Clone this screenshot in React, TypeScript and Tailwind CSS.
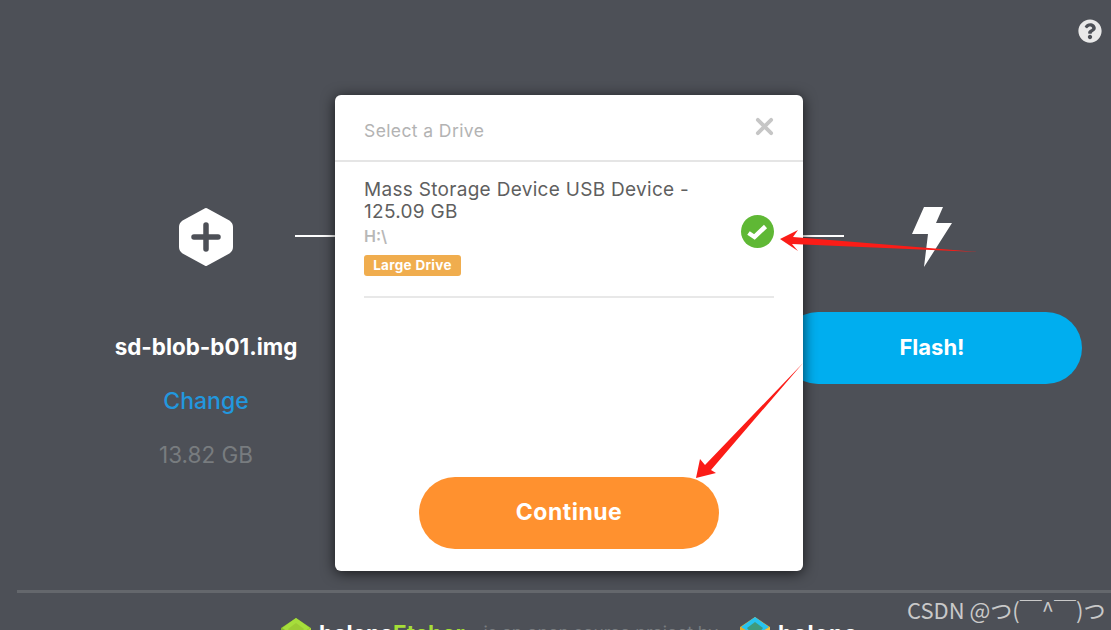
import { FaQuestionCircle } from "react-icons/fa";

const font = { fontFamily: "Inter, 'Noto Sans', sans-serif" };

function Cube({ top, left, right, center }: { top: string; left: string; right: string; center: string }) {
  return (
    <svg viewBox="0 0 30 34" className="w-[30px] h-[34px] shrink-0">
      <path d="M15 0 L30 10 V25 L15 34 L0 25 V10 Z" fill={left} />
      <path d="M15 18 L30 10 V25 L15 34 Z" fill={right} />
      <path d="M15 0 L29 10 L15 19 L1 10 Z" fill={top} />
      <path d="M15 5 L23 11 L15 21 L7 11 Z" fill={center} />
    </svg>
  );
}

function Arrows() {
  return (
    <svg className="absolute inset-0 pointer-events-none" width="1111" height="630" viewBox="0 0 1111 630">
      <path d="M780 239 L798 230 L793 237 L978 252 L792 244 L798 251 Z" fill="#fb1c17" />
      <path d="M696 478 L700 459 L705 465 L803 363 L711 470 L716 473 Z" fill="#fb1c17" />
    </svg>
  );
}

export default function App() {
  return (
    <div className="relative w-[1111px] h-[630px] overflow-hidden bg-[#4d5057]" style={font}>
      <div className="flex justify-end pr-[9px] pt-[19px]">
        <FaQuestionCircle className="w-[24px] h-[24px] text-[#e9e9e9]" />
      </div>

      {/* step icons and the line between them */}
      <div className="flex items-center mt-[164px] pl-[178px] h-[60px]">
        <svg viewBox="0 0 56 60" className="w-[56px] h-[60px] shrink-0">
          <path
            d="M28 3 L50 15 Q53 17 53 20 V40 Q53 43 50 45 L28 57 L6 45 Q3 43 3 40 V20 Q3 17 6 15 Z"
            fill="#fff"
            stroke="#fff"
            strokeWidth="4"
            strokeLinejoin="round"
          />
          <path d="M16 30 H40 M28 18 V42" stroke="#4d5057" strokeWidth="5.5" strokeLinecap="round" />
        </svg>
        <div className="ml-[61px] mb-[2px] w-[549px] h-[2px] bg-white" />
        <svg viewBox="0 0 42 62" className="ml-[67px] w-[42px] h-[62px] shrink-0">
          <path d="M13 1 H32 L25 17 H41 L13 61 L17 28 H1 Z" fill="#fff" />
        </svg>
      </div>

      {/* the three steps; the middle one is under the modal */}
      <div className="grid grid-cols-[300px_300px_300px] gap-x-[63px] pl-[56px] mt-[45px] h-[278px]">
        <div className="flex flex-col items-center">
          <div className="mt-[20px] h-[30px] leading-[30px] text-[22.4px] font-bold text-white">sd-blob-b01.img</div>
          <div className="mt-[24px] h-[30px] leading-[30px] text-[23px] font-medium text-[#2297de]">Change</div>
          <div className="mt-[24px] h-[30px] leading-[30px] text-[22.5px] text-[#787c7f]">13.82 GB</div>
        </div>
        <div />
        <button className="h-[72px] pb-[2px] rounded-full bg-[#00aeef] text-white font-bold text-[22px]">Flash!</button>
      </div>

      {/* footer */}
      <div className="ml-[17px] h-[3px] bg-[#64676c]" />
      <div className="flex items-start mt-[25px] pl-[281px] leading-[24px] whitespace-nowrap">
        <Cube top="#a6de3b" left="#86b82c" right="#b5d93a" center="#9ccc34" />
        <div className="ml-[8px] mt-[4px] text-[22.5px] font-bold text-white">
          balena<span className="text-[#a5de37]">Etcher</span>
        </div>
        <div className="ml-[19px] mt-[3px] text-[#787c7f] text-[17.5px]">is an open source project by</div>
        <div className="ml-[22px] -mt-[1px]">
          <Cube top="#27c4f0" left="#e8ac25" right="#f5c33b" center="#3f9b7d" />
        </div>
        <div className="ml-[8px] mt-[4px] text-[22.5px] tracking-[1px] font-bold text-white">balena</div>
        <div className="ml-[218px] mt-[6px] text-[12px] text-[#787c7f]">1.5.5</div>
      </div>

      {/* modal */}
      <div className="absolute left-[335px] top-[95px] w-[468px] h-[476px] flex flex-col bg-white rounded-md shadow-[0_2px_14px_rgba(0,0,0,0.7)]">
        <div className="flex items-start justify-between h-[67px] border-b-2 border-[#e5e5e5] px-[29px]">
          <div className="mt-[25px] text-[17.5px] leading-[22px] tracking-[0.4px] text-[#b3b3b3]">Select a Drive</div>
          <svg viewBox="0 0 20 20" className="mt-[22px] w-[19px] h-[19px]">
            <path d="M3 3 L17 17 M17 3 L3 17" stroke="#c6c6c6" strokeWidth="4" strokeLinecap="round" />
          </svg>
        </div>
        <div className="mx-[29px] h-[136px] border-b-2 border-[#e8e8e8] flex items-start">
          <div className="w-[340px] pt-[17px]">
            <div className="text-[19px] leading-[22px] tracking-[0.3px] text-[#5f5f5f]">
              Mass Storage Device USB Device - 125.09 GB
            </div>
            <div className="mt-[3px] text-[16px] leading-[20px] font-semibold text-[#b8b8b8]">H:\</div>
            <div className="mt-[9px] w-[97px] h-[21px] rounded-[3px] bg-[#f0ad4e] text-white text-[13.5px] tracking-[0.3px] font-bold leading-[20px] text-center">
              Large Drive
            </div>
          </div>
          <svg viewBox="0 0 33 33" className="ml-[38px] mt-[53px] w-[33px] h-[33px] shrink-0">
            <circle cx="16.5" cy="16.5" r="16.5" fill="#5fb835" />
            <path d="M7.5 18 L13.5 22 L24.5 11.5" fill="none" stroke="#fff" strokeWidth="4.5" />
          </svg>
        </div>
        <div className="flex-1 flex items-end justify-center pb-[22px]">
          <button className="w-[300px] h-[72px] pb-[2px] rounded-full bg-[#ff912f] text-white text-[23px] font-bold tracking-[0.5px]">
            Continue
          </button>
        </div>
      </div>

      <Arrows />

      {/* watermark */}
      <div
        className="absolute left-[907px] top-[595px] text-[22px] leading-[28px] whitespace-nowrap text-[#c9c9c9]"
        style={{ fontFamily: "'Noto Sans CJK JP', 'Liberation Sans', sans-serif" }}
      >
        CSDN @つ(￣^￣)つ
      </div>
    </div>
  );
}
